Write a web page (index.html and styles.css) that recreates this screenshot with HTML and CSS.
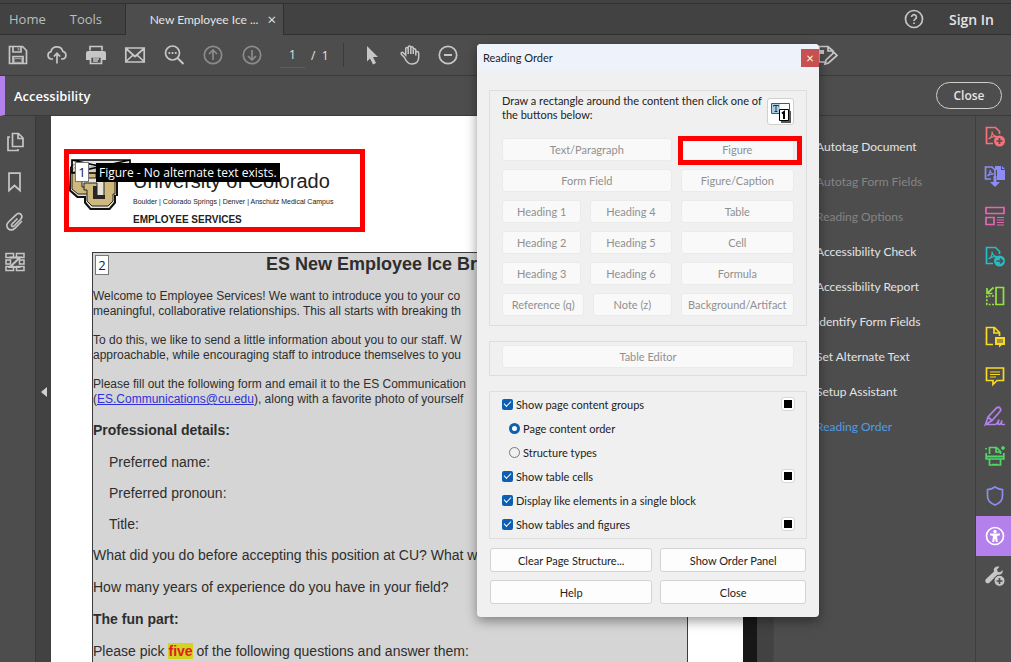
FILE: index.html
```html
<!DOCTYPE html>
<html lang="en">
<head>
<meta charset="utf-8">
<title>New Employee Ice Breaker</title>
<link rel="stylesheet" href="styles.css">
</head>
<body>
<div class="app">
  <div class="titlebar"></div>
  <header class="tabs">
    <nav class="menus">
      <button class="menu">Home</button>
      <button class="menu">Tools</button>
    </nav>
    <div class="doc-tab"><span>New Employee Ice ...</span><button class="tab-close" aria-label="Close tab">×</button></div>
    <div class="account">
      <button class="icon" aria-label="Help">
        <svg width="20" height="20" viewBox="0 0 20 20"><circle cx="10" cy="10" r="8.5"/><path d="M7.6 8a2.4 2.4 0 1 1 3.6 2.1c-.8.5-1.2.8-1.2 1.9M10 13.5v1.5"/></svg>
      </button>
      <button class="signin">Sign In</button>
    </div>
  </header>

  <div class="toolbar">
    <div class="tools">
      <button class="icon" aria-label="Save"><svg width="20" height="20" viewBox="0 0 20 20"><path d="M1.500 1.500h13l4 4v13h-17zM5 1.500v5.500h8v-5.500M5 18.500v-7h10v7"/><path d="M10.500 2.500v3M6 13.500h8v4h-8z" class="dim"/></svg></button>
      <button class="icon" aria-label="Upload"><svg width="20" height="20" viewBox="0 0 20 20"><path d="M6 14H4.500a3.700 3.700 0 0 1-.6-7.300 6.200 6.200 0 0 1 12-.2 3.800 3.800 0 0 1-.4 7.500H14M10 18.500V8.500M6.800 11.500L10 8.300l3.200 3.200"/></svg></button>
      <button class="icon" aria-label="Print"><svg width="20" height="20" viewBox="0 0 20 20"><path d="M4 5.500v-4h12v4"/><path class="solid" d="M2 6h16q2 0 2 2v7h-4v-3H4v3H0V8q0-2 2-2z"/><path d="M4.500 12h11v6.500h-11zM7 14h6M7 16h5"/></svg></button>
      <button class="icon" aria-label="Email"><svg width="20" height="20" viewBox="0 0 20 20"><path d="M.8 3h18.400v14H.8zM1 3.500l9 8 9-8M1 16.500l7-6.500M19 16.500L12 10"/></svg></button>
      <button class="icon" aria-label="Search"><svg width="20" height="20" viewBox="0 0 20 20"><circle cx="8.500" cy="8" r="7"/><path d="M13.500 13l6 6" class="thick"/><path class="thick" d="M4.500 8h1.700M7.700 8h1.700M10.900 8h1.700"/></svg></button>
      <button class="icon off" aria-label="Previous page"><svg width="20" height="20" viewBox="0 0 20 20"><circle cx="10" cy="10" r="8.700"/><path d="M10 15V5M6 9l4-4 4 4"/></svg></button>
      <button class="icon off" aria-label="Next page"><svg width="20" height="20" viewBox="0 0 20 20"><circle cx="10" cy="10" r="8.700"/><path d="M10 5v10M6 11l4 4 4-4"/></svg></button>
    </div>
    <div class="pager"><input class="page-no" value="1" aria-label="Page number"><span>/&nbsp; 1</span></div>
    <div class="sep"></div>
    <button class="icon" aria-label="Select"><svg width="20" height="20" viewBox="0 0 20 20"><path class="solid" d="M5 1l11 11h-5l3 6-3 1.500L8 13.500l-3 3z"/></svg></button>
    <button class="icon" aria-label="Pan"><svg width="20" height="20" viewBox="0 0 20 20"><path class="fine" d="M4.500 12.500L1.500 9.500C.3 7.800 2 6.500 3.500 8l2.200 2.200V4q0-1.500 1.200-1.500T8.200 4v5V2.500Q8.200 1 9.500 1t1.300 1.500V9 3q0-1.300 1.200-1.300T13.300 3v6-4q0-1.300 1.200-1.300T15.800 5v5.500V8q.2-1.500 1.500-1.500T18.700 8v4c0 4-2 7-7 7-4 0-5.500-2.500-7.200-6.500z"/></svg></button>
    <button class="icon" aria-label="Zoom out"><svg width="20" height="20" viewBox="0 0 20 20"><circle cx="10" cy="10" r="8.700"/><path d="M6 10h8" class="thick"/></svg></button>
    <button class="icon edit" aria-label="Edit"><svg width="20" height="20" viewBox="0 0 20 20"><path d="M1 1.500h9l5 4.500v2M10 1.500V6h5M1 1v16h6"/><path class="solid" d="M1 5h5v4H1z"/><path d="M8 15l8-7.500 3 3-8.500 7.500-3.500 1z"/></svg></button>
  </div>

  <div class="toolhead">
    <h1>Accessibility</h1>
    <button class="pill">Close</button>
  </div>

  <main class="work">
    <nav class="left-rail">
      <button class="icon" aria-label="Pages"><svg width="20" height="20" viewBox="0 0 20 20"><path d="M7.500 1.500h6l4.500 4.500V14.500H7.500zM13 1.500V6.500h5M5 5H3v13.500h10V17"/></svg></button>
      <button class="icon" aria-label="Bookmarks"><svg width="20" height="20" viewBox="0 0 20 20"><path d="M4 1.200h11v17.300l-5.500-5-5.500 5z"/></svg></button>
      <button class="icon" aria-label="Attachments"><svg width="20" height="20" viewBox="0 0 20 20"><path d="M12.500 6.500L7 12c-1.500 1.700.5 3.500 2 2l6.500-6.500c3.500-4-1-8-4.500-4.700L3.500 10c-4.500 4.700 1.500 11 6.300 6.300L17 9"/></svg></button>
      <button class="icon" aria-label="Order"><svg width="20" height="20" viewBox="0 0 20 20"><path class="fine" d="M1 1.500h7.500v4H1zM11.500 1.500H19v4h-7.500zM1 8h4.500v4H1zM14.500 8H19v4h-4.500zM1 14.500h7.500v4H1zM11.500 14.500H19v4h-7.500z"/><path d="M4.500 5.500h10.500l-10 9.500h10.500" class="thick"/></svg></button>
    </nav>
    <button class="collapse" aria-label="Collapse"><svg width="6" height="10" viewBox="0 0 6 10"><path class="solid" d="M6 0v10L0 5z"/></svg></button>

    <article class="page">
      <div class="letterhead">
        <svg class="cu" width="52" height="52" viewBox="0 0 52 52">
          <path fill="#111" d="M1 8l3-3h27v6h18v26h-2v7l-6 7H21l-6-7v-5H8l-8-7z"/>
          <path fill="#e6e2d8" d="M2 9l3-3h25v7h17v23h-2v7l-5 6H22l-5-6v-6H9l-7-6z"/>
          <path fill="#cfb87c" stroke="#222" d="M3 11l3-3h21v11h-8v-3h-6v12h6v-3h8v10H9l-6-5z"/>
          <path fill="#cfb87c" stroke="#222" d="M15 24h13v13h7V22h-4v-8h15v21h-2v7l-5 5H23l-5-5V31h-3z"/>
          <path fill="#2a2526" d="M24 27h4v9h8v4H24z"/>
        </svg>
        <div class="mast">
          <div class="uni">University of Colorado</div>
          <div class="campus">Boulder | Colorado Springs | Denver | Anschutz Medical Campus</div>
          <div class="dept">EMPLOYEE SERVICES</div>
        </div>
        <svg class="region" width="60" height="16" viewBox="0 0 60 16"><path d="M1 1h58v13H1zM1 1l58 13M1 14L59 1"/></svg>
        <span class="order first">1</span>
        <div class="tip">Figure - No alternate text exists.</div>
        <div class="mark"></div>
      </div>
      <section class="block">
        <span class="order second">2</span>
        <h2>ES New Employee Ice Breaker</h2>
        <p class="intro">Welcome to Employee Services! We want to introduce you to your co<br>meaningful, collaborative relationships. This all starts with breaking th</p>
        <p class="intro">To do this, we like to send a little information about you to our staff. W<br>approachable, while encouraging staff to introduce themselves to you</p>
        <p class="intro">Please fill out the following form and email it to the ES Communication<br>(<a href="#mail">ES.Communications@cu.edu</a>), along with a favorite photo of yourself</p>
        <h3>Professional details:</h3>
        <p class="field">Preferred name:</p>
        <p class="field">Preferred pronoun:</p>
        <p class="field">Title:</p>
        <p>What did you do before accepting this position at CU? What wa</p>
        <p>How many years of experience do you have in your field?</p>
        <h3>The fun part:</h3>
        <p>Please pick <mark>five</mark> of the following questions and answer them:</p>
      </section>
    </article>
    <div class="scroll"></div>
    <div class="gutter"></div>

    <aside class="panel">
      <button>Autotag Document</button>
      <button class="off">Autotag Form Fields</button>
      <button class="off">Reading Options</button>
      <button>Accessibility Check</button>
      <button>Accessibility Report</button>
      <button>Identify Form Fields</button>
      <button>Set Alternate Text</button>
      <button>Setup Assistant</button>
      <button class="current">Reading Order</button>
    </aside>

    <nav class="right-rail">
      <button class="icon red" aria-label="Create PDF"><svg width="20" height="20" viewBox="0 0 20 20"><path d="M8 17.500H1.500v-16h9l4 4V8"/><path class="slim" d="M3.500 13c2-1 4-4 3.500-7.500C7.500 9 9.500 10.500 12 10.500c-3-.5-6 .5-8.500 2.500z"/><circle class="solid" cx="14.500" cy="15" r="5.500"/><path class="cut" d="M14.500 12v6M11.500 15h6"/></svg></button>
      <button class="icon blue" aria-label="Combine"><svg width="22" height="22" viewBox="0 0 22 22"><path class="solid" d="M11 1h6v4h4v10h-8V5h-2zM18 1l3 3h-3z"/><path d="M7 14H1.500V2H8l3 3v7"/><path class="slim" d="M3.500 11c2-2 3-4 2.500-6 .5 3 2 4 4 4-2 0-4 0-6.500 2z"/><path class="solid" d="M9.500 11h3v6H16l-5 5-5-5h3.500z"/></svg></button>
      <button class="icon pink" aria-label="Organize"><svg width="20" height="20" viewBox="0 0 20 20"><path d="M1 1.500h18v6H1zM1 11.500h8v7H1z"/><path class="slim" d="M12 11.500h7M12 14h7M12 16.500h7M12 19h7"/></svg></button>
      <button class="icon teal" aria-label="Export PDF"><svg width="20" height="20" viewBox="0 0 20 20"><path d="M8 17.500H1.500v-16h9l4 4V8"/><path class="slim" d="M3.500 13c2-1 4-4 3.500-7.500C7.500 9 9.500 10.500 12 10.500c-3-.5-6 .5-8.500 2.500z"/><circle class="solid" cx="14.500" cy="15" r="5.500"/><path class="cut" d="M11.500 15h6M15 12.500l2.500 2.500-2.500 2.500"/></svg></button>
      <button class="icon lime" aria-label="Edit pages"><svg width="20" height="20" viewBox="0 0 20 20"><path d="M11 1.500h7.500v17H11z"/><path stroke-dasharray="2 1.500" d="M9 10H1.800v8.500H9"/><path d="M8.500 1.500L3 6.500M2 2v5.500h5.500"/></svg></button>
      <button class="icon yellow" aria-label="Request comments"><svg width="20" height="20" viewBox="0 0 20 20"><path d="M8 18.500H1.500v-17h8l5 5V10M9 1.500V7h5.500"/><path class="solid" d="M10 11h10v8h-3l-3 2.500V19h-4z"/><path class="cut slim" d="M12 14h6M12 16h6"/></svg></button>
      <button class="icon yellow" aria-label="Comment"><svg width="20" height="20" viewBox="0 0 20 20"><path d="M1.500 2h17v12.500H12L8 18.500v-4H1.500z"/><path d="M5 6h10M5 8.500h10M5 11h6" class="slim"/></svg></button>
      <button class="icon purple" aria-label="Fill and sign"><svg width="22" height="20" viewBox="0 0 22 20"><path d="M1.500 18.500L4 11 12.500 2q2-1.500 3.500 0t0 3.500L8 14.500zM4 11l4 3.500M1.500 18.500H11c2 0 4-5 4-5s-2 5 0 5 3-4 3-4-1.500 4 0 4h3"/></svg></button>
      <button class="icon green" aria-label="Scan"><svg width="20" height="20" viewBox="0 0 20 20"><path d="M4.500 8V1.500h7l4 4V8M11 2v4h4M1.200 7v6h17.600V7M4.500 13v6h11v-6M7 18.500h6"/><path class="thick" d="M1 10.500h18"/><path d="M18 0v4M16 2h4M1 2v1.500"/></svg></button>
      <button class="icon blue" aria-label="Protect"><svg width="20" height="20" viewBox="0 0 20 20"><path d="M10 1c3 2 5 2.500 7.500 2.700V10c0 4.500-3.500 7.500-7.500 9-4-1.500-7.500-4.500-7.500-9V3.700C5 3.500 7 3 10 1z"/></svg></button>
      <button class="icon active" aria-label="Accessibility"><svg width="20" height="20" viewBox="0 0 20 20"><circle cx="10" cy="10" r="8.500"/><circle class="solid" cx="10" cy="5.500" r="1.700"/><path class="solid" d="M5 7.500h10v1.800l-3 .6.800 6h-1.900L10 12.500l-.9 3.400H7.200l.8-6-3-.6z"/></svg></button>
      <button class="icon" aria-label="More tools"><svg width="20" height="20" viewBox="0 0 20 20"><path class="solid" d="M1 13l8-7.500C8 2 11 0 14.500.8L12 3.500l.7 2.300 2.500.5L17.500 4c.7 3-1.500 5.500-5 4.800L4 17c-2.500 1.500-5-2-3-4z"/><circle class="solid ring" cx="14.500" cy="14.800" r="5.500"/><path class="cut" d="M14.500 12v6M11.500 15h6"/></svg></button>
    </nav>
  </main>
</div>

<section class="dialog" role="dialog" aria-labelledby="dlg">
  <header class="dlg-head"><h2 id="dlg">Reading Order</h2><button class="dlg-x" aria-label="Close dialog">×</button></header>
  <div class="dlg-body">
    <div class="group tags">
      <div class="hint">
        <p>Draw a rectangle around the content then click one of the buttons below:</p>
        <button class="sample" aria-label="Reading order help"><svg width="22" height="22" viewBox="0 0 22 22"><path fill="#fff" stroke="#555" d="M1.500 2.500h18v10h-18z"/><path fill="#a9cfe8" d="M2 3h8v9H2z"/><path stroke="#333" d="M3.500 5.500v-1h5v1M6 4.500v6M4.500 10.500h3"/><path fill="#555" d="M11 10h10v12H11z"/><path fill="#fff" stroke="#000" d="M9.500 8.500h9v11h-9z"/><path stroke="#000" stroke-width="2" d="M12 12.500l2-1.500v7"/></svg></button>
      </div>
      <div class="grid">
        <button class="two" disabled>Text/Paragraph</button><div class="target"><button disabled>Figure</button><span class="mark"></span></div>
        <button class="two" disabled>Form Field</button><button disabled>Figure/Caption</button>
        <button disabled>Heading 1</button><button disabled>Heading 4</button><button disabled>Table</button>
        <button disabled>Heading 2</button><button disabled>Heading 5</button><button disabled>Cell</button>
        <button disabled>Heading 3</button><button disabled>Heading 6</button><button disabled>Formula</button>
        <div class="two pair"><button disabled>Reference (q)</button><button disabled>Note (z)</button></div><button disabled>Background/Artifact</button>
      </div>
    </div>
    <div class="group editor"><button disabled>Table Editor</button></div>
    <div class="group options">
      <div class="opt"><label><input type="checkbox" checked>Show page content groups</label><button class="swatch" aria-label="Content group color"></button></div>
      <div class="opt sub"><label><input type="radio" name="mode" checked>Page content order</label></div>
      <div class="opt sub"><label><input type="radio" name="mode">Structure types</label></div>
      <div class="opt"><label><input type="checkbox" checked>Show table cells</label><button class="swatch" aria-label="Table cell color"></button></div>
      <div class="opt"><label><input type="checkbox" checked>Display like elements in a single block</label></div>
      <div class="opt"><label><input type="checkbox" checked>Show tables and figures</label><button class="swatch" aria-label="Figure color"></button></div>
    </div>
    <div class="actions">
      <button>Clear Page Structure...</button><button>Show Order Panel</button>
      <button>Help</button><button>Close</button>
    </div>
  </div>
</section>
</body>
</html>
```

FILE: styles.css
```css
* { box-sizing: border-box; }
body { margin: 0; background: #4d4d4d; font-family: "Open Sans", "Noto Sans", sans-serif; overflow: hidden; }
h1, h2, h3, p { margin: 0; }
button { font: inherit; color: inherit; background: none; border: 0; padding: 0; }
svg { display: block; overflow: visible; fill: none; stroke: currentColor; stroke-width: 1.7; }
.solid { fill: currentColor; stroke: none; }
.thick { stroke-width: 2; }
.slim { stroke-width: 1.2; }
.fine { stroke-width: 1.5; }
.dim { opacity: 0.6; }
.cut { stroke: #4d4d4d; }
.ring { stroke: #4d4d4d; stroke-width: 1; }

.app { display: flex; flex-direction: column; height: 100vh; color: #e4e4e4; }
.titlebar { height: 4px; flex: none; background: #424242; border-bottom: 1px solid #303030; }
.tabs { display: flex; height: 31px; flex: none; background: #424242; }
.menus { display: flex; gap: 24px; width: 125px; padding-left: 9px; border-bottom: 1px solid #303030; font-size: 13px; color: #bdbdbd; }
.doc-tab { display: flex; align-items: center; justify-content: flex-end; gap: 9px; width: 159px; padding-right: 7px; border: 1px solid #303030; border-width: 0 1px; background: #4d4d4d; font: 12px Lato, sans-serif; }
.tab-close { font: 15px/15px "Open Sans", sans-serif; }
.account { display: flex; flex: 1; align-items: center; justify-content: flex-end; gap: 25px; padding-right: 17px; border-bottom: 1px solid #303030; }
.signin { font-size: 14px; font-weight: 600; }
.icon { display: flex; align-items: center; justify-content: center; flex: none; color: #c6c6c6; }
.icon.off { color: #8b8b8b; }

.toolbar { position: relative; display: flex; align-items: center; height: 41px; flex: none; gap: 18px; padding-left: 8px; border-bottom: 1px solid #3a3a3a; }
.tools { display: flex; gap: 19px; }
.pager { display: flex; align-items: center; gap: 6px; font-size: 12px; width: 45px; white-space: nowrap; }
.page-no { width: 25px; height: 25px; flex: none; padding: 0; background: none; border: 0; border-bottom: 1px solid #606060; color: inherit; font: inherit; text-align: center; }
.sep { width: 1px; height: 24px; background: #3a3a3a; }
.edit { position: absolute; left: 818px; }

.toolhead { display: flex; align-items: center; justify-content: space-between; height: 40px; flex: none; padding: 0 9px; border-left: 5px solid #b480ec; border-bottom: 1px solid #3a3a3a; }
.toolhead h1 { font-size: 13px; font-weight: 600; color: #fff; }
.pill { width: 66px; height: 27px; border: 1px solid #d0d0d0; border-radius: 14px; font-size: 12px; font-weight: 600; }

.work { display: flex; flex: 1; min-height: 0; overflow: hidden; }
.left-rail { display: flex; flex-direction: column; gap: 20px; width: 35px; flex: none; padding: 16px 0 0 5px; align-items: flex-start; }
.collapse { width: 16px; flex: none; display: flex; align-items: center; justify-content: center; padding-top: 6px; background: #424242; border-left: 1px solid #383838; color: #d0d0d0; }
.page { flex: 1; min-width: 0; padding: 33px 55px 0 41px; background: #fff; color: #2e2e2e; font-family: "Liberation Sans", Arial, sans-serif; font-size: 14px; overflow: hidden; white-space: nowrap; }
.scroll { width: 14px; flex: none; background: #171717; }
.gutter { width: 16px; flex: none; background: #424242; }

.letterhead { position: relative; width: 301px; height: 83px; margin-left: -28px; display: flex; gap: 12px; padding: 10px 5px 5px; }
.cu { stroke: none; stroke-width: 1; }
.mast { padding-top: 10px; color: #222; }
.uni { font-size: 20px; line-height: 24px; }
.campus { font-size: 7px; line-height: 17px; }
.dept { font-size: 10px; font-weight: 700; line-height: 20px; }
.mark { position: absolute; inset: 0; border: 5px solid #f00; }
.region { position: absolute; left: 7px; top: 10px; color: #000; }
.region path { fill: rgba(220, 220, 220, 0.7); }
.order { position: absolute; display: grid; place-items: center; width: 14px; height: 20px; background: #fff; border: 1px solid #777; color: #222; font: 13px "Open Sans", sans-serif; }
.first { left: 11px; top: 13px; }
.second { left: 2px; top: 2px; }
.tip { position: absolute; left: 32px; top: 14px; padding: 0 3px; background: #000; color: #fff; font: 12px/19px "Open Sans", sans-serif; }

.block { position: relative; margin-top: 20px; padding-bottom: 60px; background: #d5d5d5; border: 1px solid #3c3c3c; line-height: 18px; }
.block h2 { font-size: 18px; line-height: 22px; margin-bottom: 14px; padding-left: 173px; }
.block h3 { font-size: 14px; margin-bottom: 14px; }
.block p { margin-bottom: 14px; }
.block .intro { font-size: 12px; line-height: 15px; }
.block .field { padding-left: 16px; margin-bottom: 13px; }
.block a { color: #3030d8; }
mark { background: #d4d322; color: #e02020; font-weight: 700; }

.panel { display: flex; flex-direction: column; align-items: flex-start; gap: 17px; width: 202px; flex: none; padding: 22px 0 0 42px; font: 12px/18px Lato, sans-serif; border-left: 1px solid #464646; }
.panel .off { color: #858585; }
.panel .current { color: #4f9ce8; }
.right-rail { width: 36px; flex: none; border-left: 1px solid #3e3e3e; }
.right-rail .icon { width: 100%; height: 40px; padding-left: 3px; }
.right-rail .red { color: #f97178; }
.right-rail .blue { color: #8c8cf6; }
.right-rail .pink { color: #e765b5; }
.right-rail .teal { color: #28bcc4; }
.right-rail .lime { color: #92e33e; }
.right-rail .yellow { color: #f8da24; }
.right-rail .purple { color: #b480ec; }
.right-rail .green { color: #4fd865; }
.right-rail .active { background: #b480ec; color: #fff; }

.dialog { position: absolute; left: 477px; top: 44px; width: 342px; background: #f0f0f0; color: #222; border-radius: 4px; font: 11px Lato, sans-serif; box-shadow: 0 4px 12px rgba(0, 0, 0, 0.4); }
.dlg-head { display: flex; justify-content: space-between; align-items: center; height: 27px; padding-left: 6px; background: #eef2fb; border-radius: 4px 4px 0 0; }
.dlg-head h2 { font-size: 11px; font-weight: 400; }
.dlg-x { width: 18px; height: 18px; background: #c75050; color: #fff; font-size: 13px; line-height: 16px; }
.dlg-body { padding: 19px 12px 13px; }
.group { border: 1px solid #dedede; padding: 0 12px; }
.tags { padding-top: 3px; padding-bottom: 9px; }
.hint { display: flex; justify-content: space-between; align-items: flex-start; height: 44px; line-height: 14px; }
.hint p { width: 260px; }
.sample { display: grid; place-items: center; width: 27px; height: 27px; margin-top: 4px; background: #fff; border: 1px solid #d0d0d0; border-radius: 3px; }
.sample svg { stroke: none; stroke-width: 1; }
.grid { display: grid; grid-template-columns: 79fr 81fr 113fr; gap: 8px 9px; }
.grid button, .editor button { height: 23px; width: 100%; background: #f9f9f9; border: 1px solid #ebebeb; border-radius: 3px; color: #909090; white-space: nowrap; }
.grid .two { grid-column: span 2; }
.pair { display: grid; grid-template-columns: 82fr 78fr; gap: 9px; }
.target { position: relative; }
.target .mark { inset: -2px -8px -4px -3px; }
.editor { margin-top: 15px; padding-top: 3px; padding-bottom: 7px; }
.options { margin-top: 15px; padding-bottom: 2px; }
.opt { display: flex; align-items: center; justify-content: space-between; height: 24px; }
.opt label { display: flex; align-items: center; gap: 3px; }
.opt input { appearance: none; width: 11px; height: 11px; margin: 0; display: grid; place-items: center; }
.opt input[type="checkbox"] { background: #0b5fb5; border-radius: 2px; }
.opt input[type="checkbox"]::after { content: ""; width: 6px; height: 3px; margin-bottom: 2px; border: solid #fff; border-width: 0 0 1px 1px; transform: rotate(-45deg); }
.opt input[type="radio"] { border: 1px solid #777; border-radius: 50%; }
.opt input[type="radio"]:checked { border: 3px solid #0b5fb5; background: #fff; }
.sub { padding-left: 7px; }
.swatch { width: 12px; height: 12px; background: #000; border: 2px solid #fff; outline: 1px solid #d6d6d6; border-radius: 2px; }
.actions { display: grid; grid-template-columns: 163fr 146fr; gap: 8px; margin-top: 9px; padding: 0 1px; }
.actions button { height: 24px; background: #fdfdfd; border: 1px solid #d2d2d2; border-radius: 3px; }
```
